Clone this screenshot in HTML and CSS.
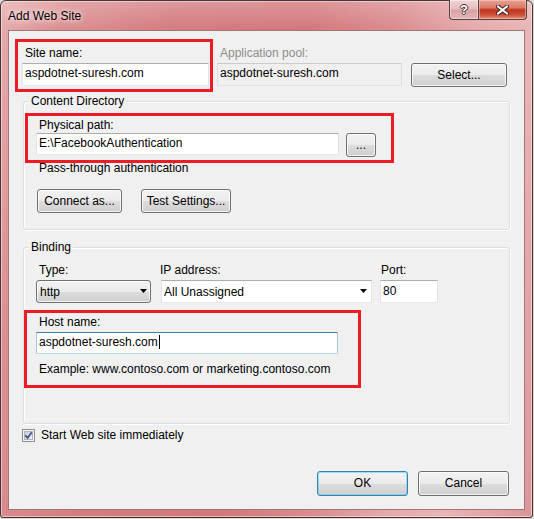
FILE: index.html
```html
<!DOCTYPE html>
<html>
<head>
<meta charset="utf-8">
<title>Add Web Site</title>
<link rel="stylesheet" href="styles.css">
</head>
<body>
<div class="window">
  <div class="titlebar">
    <span class="title">Add Web Site</span>
    <div class="caption-buttons">
      <div class="cap-btn cap-help"><span class="help-glyph">?</span></div>
      <div class="cap-btn cap-close">
        <svg width="13" height="10" viewBox="0 0 13 10">
          <path d="M2 1.5 L11 8.5 M11 1.5 L2 8.5" stroke="#3b2222" stroke-width="4" stroke-linecap="square" fill="none"/>
          <path d="M2 1.5 L11 8.5 M11 1.5 L2 8.5" stroke="#ffffff" stroke-width="2" stroke-linecap="square" fill="none"/>
        </svg>
      </div>
    </div>
  </div>

  <div class="client">
    <div class="row-site">
      <div class="field field-site">
        <label class="lbl">Site name:</label>
        <div class="textbox">aspdotnet-suresh.com</div>
      </div>
      <div class="field field-pool">
        <label class="lbl lbl-disabled">Application pool:</label>
        <div class="textbox textbox-readonly">aspdotnet-suresh.com</div>
      </div>
      <button class="btn btn-select">Select...</button>
    </div>

    <div class="group group-content">
      <span class="legend">Content Directory</span>
      <label class="lbl lbl-path">Physical path:</label>
      <div class="path-row">
        <div class="textbox tb-path">E:\FacebookAuthentication</div>
        <button class="btn btn-browse">...</button>
      </div>
      <div class="lbl pass">Pass-through authentication</div>
      <div class="dir-buttons">
        <button class="btn btn-connect">Connect as...</button>
        <button class="btn btn-test">Test Settings...</button>
      </div>
    </div>

    <div class="group group-binding">
      <span class="legend">Binding</span>
      <div class="bind-row">
        <div class="col col-type">
          <label class="lbl">Type:</label>
          <div class="combo combo-type">
            <span>http</span>
            <svg class="arrow" width="7" height="4" viewBox="0 0 7 4"><path d="M0 0H7L3.5 4Z" fill="#000"/></svg>
          </div>
        </div>
        <div class="col col-ip">
          <label class="lbl">IP address:</label>
          <div class="combo combo-ip">
            <span>All Unassigned</span>
            <svg class="arrow" width="7" height="4" viewBox="0 0 7 4"><path d="M0 0H7L3.5 4Z" fill="#000"/></svg>
          </div>
        </div>
        <div class="col col-port">
          <label class="lbl">Port:</label>
          <div class="textbox tb-port">80</div>
        </div>
      </div>
      <label class="lbl lbl-host">Host name:</label>
      <div class="textbox tb-host">aspdotnet-suresh.com<span class="caret"></span></div>
      <div class="lbl example">Example: www.contoso.com or marketing.contoso.com</div>
    </div>

    <div class="check-row">
      <svg class="checkbox" width="13" height="13" viewBox="0 0 13 13">
        <defs>
          <linearGradient id="cbg" x1="0" y1="0" x2="1" y2="1">
            <stop offset="0" stop-color="#c6cbd2"/>
            <stop offset="1" stop-color="#f6f6f6"/>
          </linearGradient>
        </defs>
        <rect x="0.5" y="0.5" width="12" height="12" fill="#f4f4f4" stroke="#8e8f8f"/>
        <rect x="2.5" y="2.5" width="8" height="8" fill="url(#cbg)" stroke="#b0b5bb"/>
        <path d="M3.3 6.3 L5.6 8.8 L9.8 3.2" fill="none" stroke="#3c4f8f" stroke-width="1.7"/>
      </svg>
      <span class="check-label">Start Web site immediately</span>
    </div>

    <div class="dlg-buttons">
      <button class="btn btn-dlg btn-default">OK</button>
      <button class="btn btn-dlg btn-cancel">Cancel</button>
    </div>
  </div>

  <div class="annot annot-site"></div>
  <div class="annot annot-path"></div>
  <div class="annot annot-host"></div>
</div>
</body>
</html>
```

FILE: styles.css
```css
* {
  box-sizing: border-box;
}

html, body {
  margin: 0;
  padding: 0;
}

body {
  background: #d8d8d8;
  font-family: "Liberation Sans", Arial, sans-serif;
  font-size: 12px;
  color: #000;
}

.window {
  position: relative;
  width: 533px;
  height: 518px;
  border: 1px solid #4a3334;
  border-radius: 6px 6px 3px 3px;
  display: flex;
  flex-direction: column;
  background:
    linear-gradient(180deg, rgba(255, 255, 255, 0.22) 0, rgba(255, 255, 255, 0) 28px),
    linear-gradient(100deg, #e6adae 0%, #dc9092 10%, #d47c80 28%, #d3787c 50%, #da8b8e 64%, #e5a9ab 76%, #e9b5b6 86%, #dc9497 100%);
  box-shadow: inset 0 0 0 1px rgba(255, 255, 255, 0.45);
}

.titlebar {
  height: 29px;
  display: flex;
  justify-content: space-between;
  align-items: flex-start;
  padding-left: 7px;
}

.title {
  margin-top: 8px;
  line-height: 15px;
  text-shadow: 0 0 5px rgba(255, 255, 255, 0.9), 0 0 9px rgba(255, 255, 255, 0.7);
}

.caption-buttons {
  display: flex;
  margin-top: -1px;
  margin-right: 5px;
}

.cap-btn {
  height: 20px;
  display: flex;
  align-items: center;
  justify-content: center;
  border: 1px solid #5a3f40;
  border-top: none;
}

.cap-help {
  width: 29px;
  border-right: none;
  border-radius: 0 0 0 4px;
  background: linear-gradient(180deg, #f1d6d7 0%, #e6bcbe 48%, #d9a1a4 52%, #e2b6b8 100%);
  box-shadow: inset 0 0 0 1px rgba(255, 255, 255, 0.4);
}

.help-glyph {
  color: #fff;
  font-weight: bold;
  font-size: 13px;
  line-height: 13px;
  text-shadow: 1px 0 0 #4a3030, -1px 0 0 #4a3030, 0 1px 0 #4a3030, 0 -1px 0 #4a3030;
}

.cap-close {
  width: 49px;
  border-radius: 0 0 4px 0;
  background: linear-gradient(180deg, #e9a293 0%, #d97a66 40%, #c2361f 52%, #c94a33 75%, #e39070 100%);
  box-shadow: inset 0 0 0 1px rgba(255, 220, 200, 0.45);
}

.client {
  margin: 0 7px 7px;
  height: 480px;
  border: 1px solid #a07779;
  background: #f0f0f0;
  padding: 15px 0 0 13px;
  display: flex;
  flex-direction: column;
  align-items: flex-start;
}

.lbl {
  display: block;
  line-height: 15px;
  padding-left: 3px;
  white-space: nowrap;
}

.lbl-disabled {
  color: #8d8d8d;
}

.row-site {
  display: flex;
  align-items: flex-start;
}

.field .lbl,
.col .lbl {
  margin-bottom: 2px;
}

.field-site {
  width: 187px;
}

.field-pool {
  width: 185px;
  margin-left: 8px;
}

.textbox {
  height: 23px;
  border: 1px solid;
  border-color: #abadb3 #e2e3ea #e3e9ef #e2e3ea;
  border-radius: 1px;
  background: #fff;
  padding: 0 2px;
  line-height: 19px;
  white-space: nowrap;
  overflow: hidden;
}

.textbox-readonly {
  background: #f0f0f0;
  border-color: #c9cbd0 #dcdee3 #e0e3e7 #dcdee3;
}

.btn {
  display: block;
  height: 24px;
  padding: 0;
  border: 1px solid #707070;
  border-radius: 3px;
  background: linear-gradient(180deg, #f2f2f2 0%, #ebebeb 50%, #dddddd 51%, #cfcfcf 100%);
  box-shadow: inset 0 0 0 1px rgba(255, 255, 255, 0.75);
  font-family: inherit;
  font-size: 12px;
  color: #000;
  line-height: 22px;
  text-align: center;
  white-space: nowrap;
}

.btn-select {
  width: 96px;
  margin-left: 9px;
  margin-top: 17px;
}

.group {
  margin-left: 1px;
  width: 487px;
  border: 1px solid #d5dfe5;
  border-radius: 3px;
  padding: 0 12px 16px;
  box-shadow: 1px 1px 0 #ffffff, inset 1px 1px 0 #ffffff;
}

.group-content {
  margin-top: 14px;
}

.group-binding {
  margin-top: 17px;
  padding-bottom: 46px;
}

.legend {
  display: block;
  width: max-content;
  margin: -8px 0 0 -7px;
  padding: 0 2px;
  background: #f0f0f0;
  line-height: 15px;
}

.lbl-path {
  margin-top: 9px;
}

.path-row {
  display: flex;
  align-items: flex-start;
}

.tb-path {
  width: 303px;
  height: 22px;
}

.btn-browse {
  width: 30px;
  margin-left: 7px;
}

.pass {
  margin-top: 4px;
}

.dir-buttons {
  display: flex;
  margin-top: 13px;
}

.btn-connect {
  width: 85px;
  margin-left: 1px;
}

.btn-test {
  width: 90px;
  margin-left: 19px;
}

.bind-row {
  display: flex;
  margin-top: 8px;
}

.col-type {
  width: 115px;
}

.col-ip {
  width: 211px;
  margin-left: 10px;
}

.col-ip .lbl {
  padding-left: 0;
  margin-left: -1px;
}

.col-port {
  width: 58px;
  margin-left: 8px;
}

.col-port .lbl {
  padding-left: 1px;
}

.combo {
  height: 23px;
  display: flex;
  align-items: center;
  justify-content: space-between;
  line-height: 20px;
  white-space: nowrap;
}

.combo-type {
  border: 1px solid #707070;
  border-radius: 3px;
  background: linear-gradient(180deg, #f2f2f2 0%, #ebebeb 50%, #dddddd 51%, #cfcfcf 100%);
  box-shadow: inset 0 0 0 1px rgba(255, 255, 255, 0.75);
  padding: 0 3px 0 3px;
}

.combo-ip {
  border: 1px solid;
  border-color: #abadb3 #e2e3ea #e3e9ef #e2e3ea;
  background: #fff;
  padding: 0 4px 0 2px;
}

.arrow {
  display: block;
  margin-top: -1px;
}

.tb-port {
  width: 58px;
  line-height: 20px;
}

.lbl-host {
  margin-top: 12px;
}

.tb-host {
  width: 302px;
  height: 22px;
  margin-top: 2px;
  border-color: #3d7bad #a4c9e3 #b7d9ed #a4c9e3;
}

.caret {
  display: inline-block;
  width: 1px;
  height: 14px;
  margin-left: 1px;
  background: #000;
  vertical-align: -3px;
}

.example {
  margin-top: 8px;
}

.check-row {
  display: flex;
  align-items: center;
  margin-top: 4px;
  line-height: 15px;
}

.checkbox {
  display: block;
}

.check-label {
  margin-left: 6px;
}

.dlg-buttons {
  display: flex;
  align-self: flex-end;
  margin-top: 28px;
  margin-right: 15px;
}

.btn-dlg {
  width: 91px;
  height: 25px;
  line-height: 23px;
}

.btn-default {
  border-color: #3c7fb1;
  box-shadow: inset 0 0 0 1px rgba(80, 205, 245, 0.55);
}

.btn-cancel {
  margin-left: 10px;
}

.annot {
  position: absolute;
  border: 3px solid #ed1c24;
}

.annot-site {
  left: 14px;
  top: 38px;
  width: 198px;
  height: 53px;
}

.annot-path {
  left: 24px;
  top: 112px;
  width: 369px;
  height: 50px;
}

.annot-host {
  left: 23px;
  top: 309px;
  width: 337px;
  height: 78px;
}
```
